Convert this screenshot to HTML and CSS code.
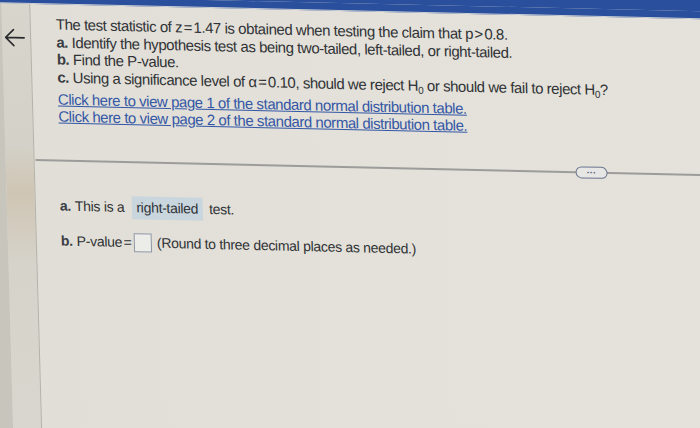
FILE: index.html
```html
<!DOCTYPE html>
<html>
<head>
<meta charset="utf-8">
<link rel="stylesheet" href="styles.css">
</head>
<body>
<div class="screen">
  <div class="topbar"></div>
  <div class="frame">
    <aside class="side">
      <svg class="back" width="22" height="20" viewBox="0 0 22 20">
        <path d="M21 10 H2.5 M10.5 2 L2.5 10 L10.5 18" fill="none" stroke="#2a2b2e" stroke-width="1.6" stroke-linecap="round" stroke-linejoin="round"/>
      </svg>
    </aside>
    <main class="main">
      <section class="question">
        <p>The test statistic of z<span class="op">=</span>1.47 is obtained when testing the claim that p<span class="op">&gt;</span>0.8.</p>
        <p><b>a.</b> Identify the hypothesis test as being two-tailed, left-tailed, or right-tailed.</p>
        <p><b>b.</b> Find the P-value.</p>
        <p><b>c.</b> Using a significance level of &alpha;<span class="op">=</span>0.10, should we reject H<sub>0</sub> or should we fail to reject H<sub>0</sub>?</p>
        <div class="links">
          <a href="#">Click here to view page 1 of the standard normal distribution table.</a>
          <a href="#">Click here to view page 2 of the standard normal distribution table.</a>
        </div>
      </section>
      <div class="divider">
        <span class="more">&bull;&bull;&bull;</span>
      </div>
      <section class="answers">
        <p><b>a.</b> This is a <span class="chosen">right-tailed</span> test.</p>
        <p><b>b.</b> P-value <span class="op">=</span><span class="input"></span> (Round to three decimal places as needed.)</p>
      </section>
    </main>
  </div>
</div>
</body>
</html>
```
FILE: styles.css
```css
html, body {
  margin: 0;
  padding: 0;
  width: 700px;
  height: 428px;
  overflow: hidden;
  background: #2a4f9c;
}
.screen {
  width: 760px;
  height: 480px;
  display: flex;
  flex-direction: column;
  font-family: "Liberation Sans", Arial, sans-serif;
  color: #303236;
  transform: skew(1.6deg, 1.3deg);
  transform-origin: 0 0;
  margin-top: -5px;
  margin-left: -14px;
  background: linear-gradient(90deg, #e0ded6 0%, #e3e1d9 50%, #e4e2da 100%);
}
.topbar {
  height: 7px;
  background: #2a4f9c;
  border-bottom: 1px solid #cdd0d6;
}
.frame {
  flex: 1;
  display: flex;
}
.side {
  width: 44px;
  background: linear-gradient(180deg, #d8d5cc 0%, #d4d1c8 30%, #cfc5b4 40%, #d6d3ca 55%, #d9d7cf 100%);
  border-right: 1px solid #b4b2aa;
  border-left: 15px solid #c8c5bd;
  box-sizing: border-box;
  display: flex;
  justify-content: flex-start;
}
.back {
  margin-top: 24px;
  margin-left: 1px;
}
.main {
  flex: 1;
  display: flex;
  flex-direction: column;
}
.question {
  padding: 11px 0 0 25px;
  font-size: 15px;
  letter-spacing: -0.45px;
}
.question p {
  margin: 0;
  line-height: 17.5px;
}
.question b, .answers b {
  font-weight: bold;
  color: #3a3d44;
}
.op {
  margin: 0 1.5px;
}
sub {
  font-size: 10px;
  vertical-align: -3px;
  line-height: 0;
}
.links {
  margin-top: 5px;
  display: flex;
  flex-direction: column;
}
.links a {
  color: #3457a6;
  text-decoration: underline;
  line-height: 17px;
}
.divider {
  margin-top: 35px;
  height: 2px;
  background: #9c9c9a;
  margin-left: 1px;
  position: relative;
}
.more {
  position: absolute;
  left: 540px;
  top: -5px;
  width: 30px;
  height: 10px;
  border: 1.5px solid #6b7590;
  border-radius: 6px;
  background: #e6e6e4;
  font-size: 6px;
  line-height: 10px;
  text-align: center;
  color: #556080;
  letter-spacing: 1px;
}
.answers {
  padding: 33px 0 0 24px;
  font-size: 14px;
  letter-spacing: -0.3px;
}
.answers p {
  margin: 0 0 12px 0;
  line-height: 23px;
  display: flex;
  align-items: center;
}
.answers p b {
  margin-right: 4px;
}
.chosen {
  background: #c9d6de;
  padding: 0 5px;
  margin: 0 6px 0 7px;
  line-height: 23px;
}
.input {
  display: inline-block;
  width: 16px;
  height: 17px;
  border: 1px solid #8f96a3;
  background: #ecece8;
  margin: 0 5px 0 1px;
}
```
